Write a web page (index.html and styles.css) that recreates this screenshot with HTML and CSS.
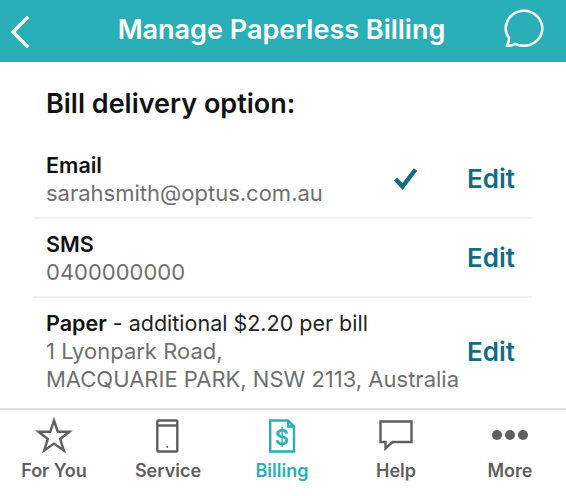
FILE: index.html
```html
<!DOCTYPE html>
<html lang="en">

<head>
    <meta charset="UTF-8">
    <meta name="viewport" content="width=device-width, initial-scale=1.0">
    <title>Manage Paperless Billing</title>
    <link rel="stylesheet" href="styles.css">
</head>

<body>
    <header class="header">
        <svg class="back-icon" width="30" height="40" viewBox="0 0 30 40">
            <path d="M25 9 L11 23 L25 37" />
        </svg>
        <h1 class="title">Manage Paperless Billing</h1>
        <svg class="chat-icon" width="44" height="44" viewBox="0 0 42 42">
            <path d="M4.5 37 C8 37 10.5 36.5 12.5 35.2 C15 36.3 17.5 37 20.5 37 C30 37 38.5 30 38.5 20.5 C38.5 11 30 3.5 21 3.5 C11.5 3.5 3.5 11 3.5 20.5 C3.5 24 4.8 27 6.8 29.5 C6.8 32 6 35 4.5 37 Z" />
        </svg>
    </header>

    <main class="content">
        <h2 class="section-title">Bill delivery option:</h2>

        <div class="option">
            <div class="option-text">
                <div class="option-name"><b>Email</b></div>
                <div class="option-detail">sarahsmith@optus.com.au</div>
            </div>
            <svg class="check-icon" width="28" height="26" viewBox="0 0 28 26">
                <path d="M3.5 13 L10.5 20.5 L23.5 3.5" />
            </svg>
            <a class="edit-link">Edit</a>
        </div>

        <div class="option">
            <div class="option-text">
                <div class="option-name"><b>SMS</b></div>
                <div class="option-detail">0400000000</div>
            </div>
            <a class="edit-link">Edit</a>
        </div>

        <div class="option option-last">
            <div class="option-text">
                <div class="option-name"><b>Paper</b> - additional $2.20 per bill</div>
                <div class="option-detail">1 Lyonpark Road,<br>MACQUARIE PARK, NSW 2113, Australia</div>
            </div>
            <a class="edit-link">Edit</a>
        </div>
    </main>

    <nav class="tabbar">
        <div class="tab">
            <svg width="38" height="38" viewBox="0 0 38 38">
                <path d="M19 3.5 L22.8 14.8 L34.5 14.8 L25.2 22 L28.8 33.5 L19 26.6 L9.2 33.5 L12.8 22 L3.5 14.8 L15.2 14.8 Z" />
            </svg>
            <span>For You</span>
        </div>
        <div class="tab">
            <svg width="38" height="38" viewBox="0 0 38 38">
                <rect x="8.3" y="3.5" width="20" height="31" rx="1" />
                <path d="M8.3 8.5 H28.3" />
                <circle class="fill" cx="18.3" cy="30" r="0.9" />
            </svg>
            <span>Service</span>
        </div>
        <div class="tab tab-active">
            <svg width="38" height="38" viewBox="0 0 38 38">
                <path d="M7.2 3.5 H25 L31 9.5 V34.5 H7.2 Z" />
                <path d="M25 3.5 V9.5 H31" />
                <text x="19" y="27.5" text-anchor="middle" class="dollar">$</text>
            </svg>
            <span>Billing</span>
        </div>
        <div class="tab">
            <svg width="38" height="38" viewBox="0 0 38 38">
                <path d="M3.5 4.5 H34.5 V25 H15.5 L8.5 31.5 V25 H3.5 Z" />
            </svg>
            <span>Help</span>
        </div>
        <div class="tab">
            <svg width="38" height="38" viewBox="0 0 38 38">
                <circle class="fill" cx="6" cy="18" r="5" />
                <circle class="fill" cx="19" cy="18" r="5" />
                <circle class="fill" cx="32" cy="18" r="5" />
            </svg>
            <span>More</span>
        </div>
    </nav>
</body>

</html>
```

FILE: styles.css
```css
* {
    margin: 0;
    padding: 0;
    box-sizing: border-box;
}

body {
    font-family: 'Inter', sans-serif;
    background-color: #fff;
    height: 100vh;
    display: flex;
    flex-direction: column;
    overflow: hidden;
}

/* Top bar */
.header {
    background-color: #29afb8;
    height: 62px;
    display: flex;
    align-items: center;
    justify-content: space-between;
    padding: 0 20px 4px 2px;
    color: #fff;
}

.title {
    font-size: 27px;
    font-weight: 600;
    margin-left: 29px;
}

.back-icon path {
    fill: none;
    stroke: #fff;
    stroke-width: 3.6;
    stroke-linecap: round;
    stroke-linejoin: round;
}

.chat-icon path {
    fill: none;
    stroke: #fff;
    stroke-width: 2.4;
    stroke-linejoin: round;
}

/* Delivery options */
.content {
    flex: 1;
    padding: 26px 34px 0 33px;
}

.section-title {
    font-size: 27px;
    line-height: 32px;
    font-weight: 600;
    color: #111;
    padding-left: 13px;
    margin-bottom: 20px;
}

.option {
    display: flex;
    align-items: center;
    height: 79px;
    padding: 0 17px 0 13px;
    border-bottom: 2px solid #f0f0f0;
}

.option-last {
    border-bottom: none;
    height: 106px;
}

.option-text {
    flex: 1;
}

.option-name {
    font-size: 21.5px;
    line-height: 28px;
    color: #222;
}

.option-name b {
    font-weight: 600;
    color: #111;
}

.option-detail {
    font-size: 22px;
    line-height: 28px;
    color: #6f6f6f;
}

.check-icon {
    margin-right: 47px;
}

.check-icon path {
    fill: none;
    stroke: #0f6d86;
    stroke-width: 4.5;
}

.edit-link {
    font-size: 26px;
    font-weight: 600;
    color: #0f6d86;
}

/* Bottom tabs */
.tabbar {
    height: 88px;
    display: flex;
    justify-content: center;
    border-top: 2px solid #dedede;
    padding: 7px 2px 0 0;
}

.tab {
    flex: 0 0 114px;
    display: flex;
    flex-direction: column;
    align-items: center;
    gap: 5px;
    color: #5f5f5f;
    font-size: 18px;
    font-weight: 600;
}

.tab svg * {
    fill: none;
    stroke: #5f5f5f;
    stroke-width: 2.4;
}

.tab svg .fill {
    fill: #5f5f5f;
    stroke: none;
}

.tab-active {
    color: #29afb8;
}

.tab-active svg * {
    stroke: #29afb8;
}

.tab svg .dollar {
    fill: #29afb8;
    stroke: none;
    font-size: 22px;
    font-family: 'Inter', sans-serif;
}
```
